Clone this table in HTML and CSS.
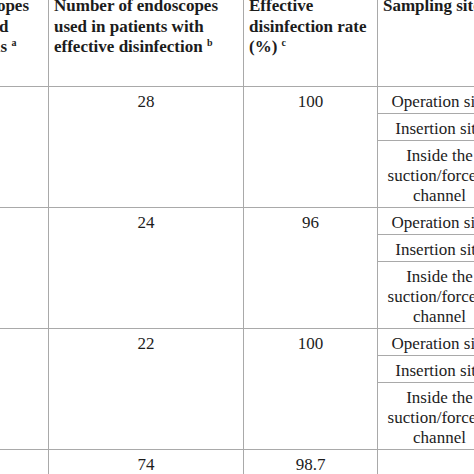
FILE: index.html
```html
<!DOCTYPE html>
<html lang="en">
<head>
<meta charset="utf-8">
<title>Endoscope disinfection table</title>
<link rel="stylesheet" href="styles.css">
</head>
<body>
<div class="frame">
  <table class="data">
    <colgroup>
      <col class="c1">
      <col class="c2">
      <col class="c3">
      <col class="c4">
    </colgroup>
    <thead>
      <tr>
        <th>Number of endoscopes<br>surveyed and tested<br>used in all hospitals <sup>a</sup></th>
        <th>Number of endoscopes<br>used in patients with<br>effective disinfection <sup>b</sup></th>
        <th>Effective<br>disinfection rate<br>(%) <sup>c</sup></th>
        <th>Sampling site</th>
      </tr>
    </thead>
    <tbody>
      <tr>
        <td class="name" rowspan="3">Hospital A</td>
        <td class="num" rowspan="3">28</td>
        <td class="num" rowspan="3">100</td>
        <td class="site">Operation site</td>
      </tr>
      <tr><td class="site">Insertion site</td></tr>
      <tr><td class="site">Inside the<br>suction/forceps<br>channel</td></tr>

      <tr>
        <td class="name" rowspan="3">Hospital B</td>
        <td class="num" rowspan="3">24</td>
        <td class="num" rowspan="3">96</td>
        <td class="site">Operation site</td>
      </tr>
      <tr><td class="site">Insertion site</td></tr>
      <tr><td class="site">Inside the<br>suction/forceps<br>channel</td></tr>

      <tr>
        <td class="name" rowspan="3">Hospital C</td>
        <td class="num" rowspan="3">22</td>
        <td class="num" rowspan="3">100</td>
        <td class="site">Operation site</td>
      </tr>
      <tr><td class="site">Insertion site</td></tr>
      <tr><td class="site">Inside the<br>suction/forceps<br>channel</td></tr>

      <tr class="total">
        <td class="name">Total</td>
        <td class="num">74</td>
        <td class="num">98.7</td>
        <td class="site"></td>
      </tr>
    </tbody>
  </table>
</div>
</body>
</html>
```

FILE: styles.css
```css
html, body {
  margin: 0;
  padding: 0;
  background: #ffffff;
}

.frame {
  width: 474px;
  height: 474px;
  overflow: hidden;
}

.data {
  border-collapse: collapse;
  table-layout: fixed;
  width: 642px;
  margin: -9px 0 0 -141px;
  font-family: "Liberation Serif", "DejaVu Serif", serif;
  font-size: 17px;
  color: #1c1c1c;
}

.c1 { width: 189px; }
.c2 { width: 195px; }
.c3 { width: 134px; }
.c4 { width: 124px; }

.data th,
.data td {
  border: 1px solid #a9a9a9;
  vertical-align: top;
}

.data th {
  text-align: left;
  font-weight: bold;
  line-height: 20.5px;
  padding: 4px 5px 0 5px;
  height: 90px;
}

.data th sup {
  font-size: 10px;
  line-height: 0;
  vertical-align: 6px;
}

.data td {
  line-height: 20px;
  padding: 5px 5px 1px 5px;
}

.data td.num,
.data td.site {
  text-align: center;
}

.data td.name {
  text-align: left;
}
```
